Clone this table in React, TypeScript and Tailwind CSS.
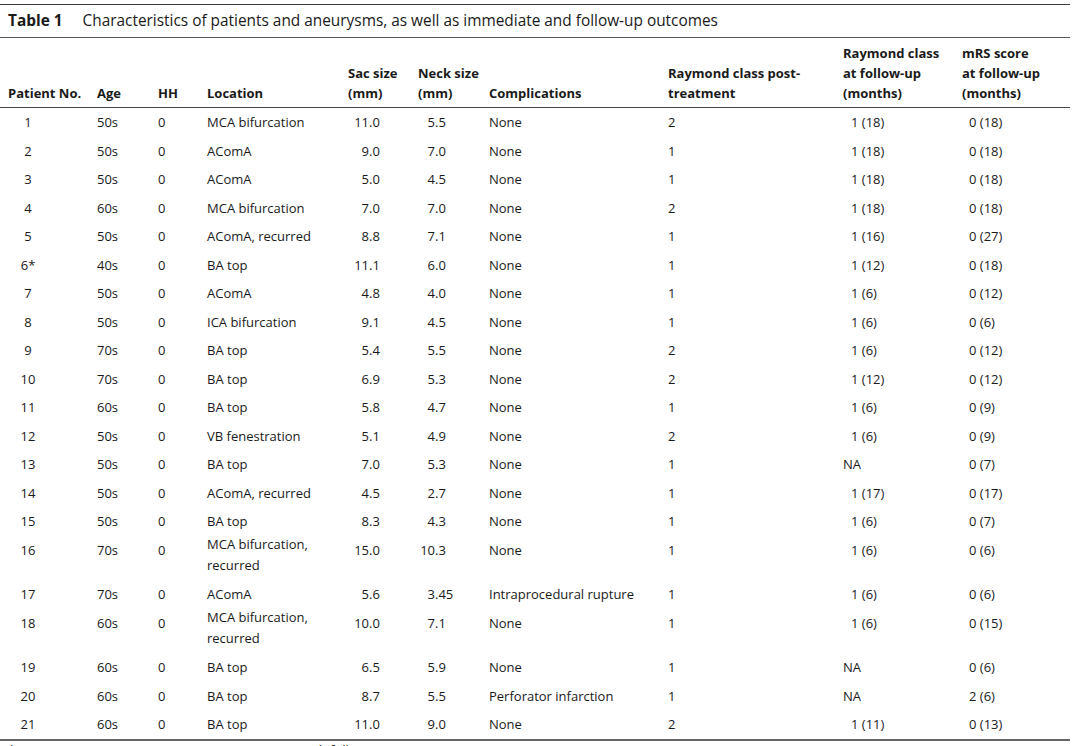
type Row = {
  no: string;
  age: string;
  loc: string[];
  sac: string;
  neck: string;
  comp: string;
  post: string;
  fu: string;
  mrs: string;
};

const rows: Row[] = [
  { no: "1", age: "50s", loc: ["MCA bifurcation"], sac: "11.0", neck: "5.5", comp: "None", post: "2", fu: "1 (18)", mrs: "0 (18)" },
  { no: "2", age: "50s", loc: ["AComA"], sac: "9.0", neck: "7.0", comp: "None", post: "1", fu: "1 (18)", mrs: "0 (18)" },
  { no: "3", age: "50s", loc: ["AComA"], sac: "5.0", neck: "4.5", comp: "None", post: "1", fu: "1 (18)", mrs: "0 (18)" },
  { no: "4", age: "60s", loc: ["MCA bifurcation"], sac: "7.0", neck: "7.0", comp: "None", post: "2", fu: "1 (18)", mrs: "0 (18)" },
  { no: "5", age: "50s", loc: ["AComA, recurred"], sac: "8.8", neck: "7.1", comp: "None", post: "1", fu: "1 (16)", mrs: "0 (27)" },
  { no: "6*", age: "40s", loc: ["BA top"], sac: "11.1", neck: "6.0", comp: "None", post: "1", fu: "1 (12)", mrs: "0 (18)" },
  { no: "7", age: "50s", loc: ["AComA"], sac: "4.8", neck: "4.0", comp: "None", post: "1", fu: "1 (6)", mrs: "0 (12)" },
  { no: "8", age: "50s", loc: ["ICA bifurcation"], sac: "9.1", neck: "4.5", comp: "None", post: "1", fu: "1 (6)", mrs: "0 (6)" },
  { no: "9", age: "70s", loc: ["BA top"], sac: "5.4", neck: "5.5", comp: "None", post: "2", fu: "1 (6)", mrs: "0 (12)" },
  { no: "10", age: "70s", loc: ["BA top"], sac: "6.9", neck: "5.3", comp: "None", post: "2", fu: "1 (12)", mrs: "0 (12)" },
  { no: "11", age: "60s", loc: ["BA top"], sac: "5.8", neck: "4.7", comp: "None", post: "1", fu: "1 (6)", mrs: "0 (9)" },
  { no: "12", age: "50s", loc: ["VB fenestration"], sac: "5.1", neck: "4.9", comp: "None", post: "2", fu: "1 (6)", mrs: "0 (9)" },
  { no: "13", age: "50s", loc: ["BA top"], sac: "7.0", neck: "5.3", comp: "None", post: "1", fu: "NA", mrs: "0 (7)" },
  { no: "14", age: "50s", loc: ["AComA, recurred"], sac: "4.5", neck: "2.7", comp: "None", post: "1", fu: "1 (17)", mrs: "0 (17)" },
  { no: "15", age: "50s", loc: ["BA top"], sac: "8.3", neck: "4.3", comp: "None", post: "1", fu: "1 (6)", mrs: "0 (7)" },
  { no: "16", age: "70s", loc: ["MCA bifurcation,", "recurred"], sac: "15.0", neck: "10.3", comp: "None", post: "1", fu: "1 (6)", mrs: "0 (6)" },
  { no: "17", age: "70s", loc: ["AComA"], sac: "5.6", neck: "3.45", comp: "Intraprocedural rupture", post: "1", fu: "1 (6)", mrs: "0 (6)" },
  { no: "18", age: "60s", loc: ["MCA bifurcation,", "recurred"], sac: "10.0", neck: "7.1", comp: "None", post: "1", fu: "1 (6)", mrs: "0 (15)" },
  { no: "19", age: "60s", loc: ["BA top"], sac: "6.5", neck: "5.9", comp: "None", post: "1", fu: "NA", mrs: "0 (6)" },
  { no: "20", age: "60s", loc: ["BA top"], sac: "8.7", neck: "5.5", comp: "Perforator infarction", post: "1", fu: "NA", mrs: "2 (6)" },
  { no: "21", age: "60s", loc: ["BA top"], sac: "11.0", neck: "9.0", comp: "None", post: "2", fu: "1 (11)", mrs: "0 (13)" },
];

// column template shared by header and body
const cols =
  "grid grid-cols-[89px_61px_49px_141px_70px_71px_179px_175px_119px_1fr]";

// decimal-aligned number: integer part right-aligned in a fixed box
function Dec({ v, w }: { v: string; w: string }) {
  const [int, frac] = v.split(".");
  return (
    <span>
      <span className={`inline-block text-right ${w}`}>{int}</span>.{frac}
    </span>
  );
}

export default function App() {
  const cell = "py-[4px] leading-[20.5px]";
  return (
    <div
      className="h-[746px] w-[1080px] overflow-hidden bg-white text-[13px] text-[#1a1a1a]"
      style={{ fontFamily: '"Open Sans", "Noto Sans", sans-serif' }}
    >
      <div className="mr-[10px] mt-[4px] border-t border-[#3a3a3a]">
        {/* title */}
        <div className="flex h-[33px] items-center border-b border-[#555] pl-[8px] text-[15.4px]">
          <span className="font-bold">Table 1</span>
          <span className="ml-[20px]">
            Characteristics of patients and aneurysms, as well as immediate and follow-up outcomes
          </span>
        </div>

        {/* header */}
        <div className={`${cols} items-end border-b border-[#444] pb-[4px] pl-[8px] pt-[5px] font-bold leading-[20px]`}>
          <div>Patient No.</div>
          <div>Age</div>
          <div>HH</div>
          <div>Location</div>
          <div>
            Sac size
            <br />
            (mm)
          </div>
          <div>
            Neck size
            <br />
            (mm)
          </div>
          <div>Complications</div>
          <div>
            Raymond class post-
            <br />
            treatment
          </div>
          <div>
            Raymond class
            <br />
            at follow-up
            <br />
            (months)
          </div>
          <div>
            mRS score
            <br />
            at follow-up
            <br />
            (months)
          </div>
        </div>

        {/* body */}
        <div className="-mb-[1px] border-b-2 border-[#666]">
          {rows.map((r) => (
            <div key={r.no} className={`${cols} items-start pl-[8px]`}>
              <div className={cell}>
                <span className="inline-block w-[40px] text-center">{r.no}</span>
              </div>
              <div className={cell}>{r.age}</div>
              <div className={cell}>0</div>
              {r.loc.length > 1 ? (
                <div className="-mt-[1.5px] pb-[4px] leading-[21px]">
                  {r.loc[0]}
                  <br />
                  {r.loc[1]}
                </div>
              ) : (
                <div className={cell}>{r.loc[0]}</div>
              )}
              <div className={cell}>
                <Dec v={r.sac} w="w-[21px]" />
              </div>
              <div className={cell}>
                <Dec v={r.neck} w="w-[17px]" />
              </div>
              <div className={cell}>{r.comp}</div>
              <div className={cell}>{r.post}</div>
              <div className={`${cell} ${r.fu === "NA" ? "" : "pl-[8px]"}`}>{r.fu}</div>
              <div className={`${cell} pl-[7px]`}>{r.mrs}</div>
            </div>
          ))}
        </div>

        <div className="pl-[8px] pt-[2px] leading-[16px]">
          *Asymptomatic in-stent stenosis (&lt;50%) at 12-month follow-up imaging.
        </div>
      </div>
    </div>
  );
}
